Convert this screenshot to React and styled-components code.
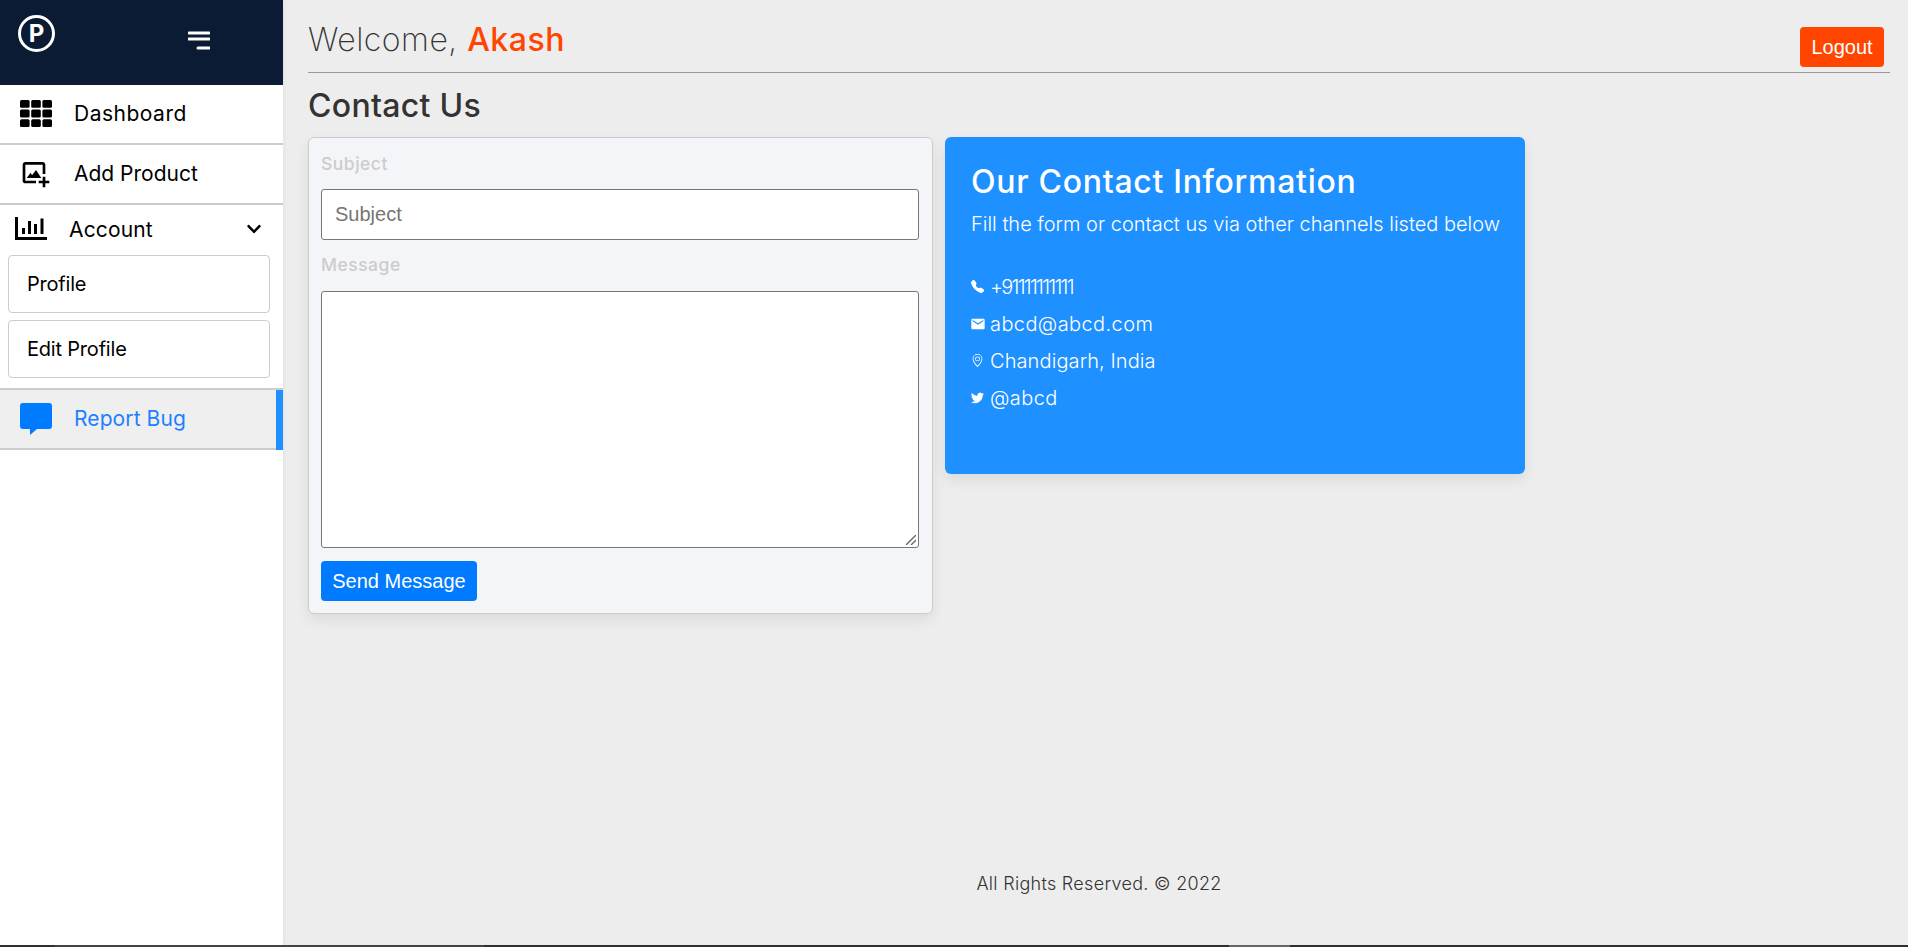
import React from "react";
import styled, { createGlobalStyle } from "styled-components";
import { BsTwitter, BsTelephoneFill, BsGeoAlt } from "react-icons/bs";
import { BiImageAdd } from "react-icons/bi";
import { MdEmail } from "react-icons/md";
import { FaChevronDown } from "react-icons/fa";

const poppins = `Inter, "Noto Sans", sans-serif`;
const arial = `"Liberation Sans", Arial, sans-serif`;

const GlobalStyle = createGlobalStyle`
  html, body {
    margin: 0;
    padding: 0;
    height: 100%;
    overflow: hidden;
    background: #ededed;
    font-family: ${poppins};
  }
  * {
    box-sizing: border-box;
  }
`;

const Page = styled.div`
  width: 100%;
  height: 100vh;
  display: flex;
  flex-direction: column;
`;
const Body = styled.div`
  flex: 1;
  min-height: 0;
  display: flex;
`;
const BottomStrip = styled.div`
  height: 2px;
  display: flex;
  background: #2f2f2f;
`;
const StripSegment = styled.span`
  margin-left: ${(p) => p.$left}px;
  width: ${(p) => p.$width}px;
  background: ${(p) => p.$color};
`;

const Sidebar = styled.aside`
  width: 283px;
  flex-shrink: 0;
  background: white;
  box-shadow: 1px 0 3px rgba(0, 0, 0, 0.05);
`;
const SidebarHead = styled.div`
  height: 85px;
  background: #0a1b33;
  display: flex;
  padding: 15px 0 0 18px;
`;
const LogoMark = styled.div`
  width: 37px;
  height: 37px;
  border: 3.5px solid white;
  border-radius: 50%;
  color: white;
  display: flex;
  align-items: center;
  justify-content: center;
  font-family: ${poppins};
  font-size: 24px;
  font-weight: 700;
  line-height: 1;
`;
const MenuToggle = styled.svg`
  width: 22px;
  height: 20px;
  margin: 16px 0 0 133px;
`;
const NavRow = styled.div`
  height: 60px;
  display: flex;
  align-items: center;
  padding: 0 0 1px 20px;
  font-size: 21px;
  letter-spacing: ${(p) => p.$spacing || 0}px;
  color: ${(p) => (p.$active ? "#1e80ff" : "black")};
  background: ${(p) => (p.$active ? "#efefef" : "white")};
  border-bottom: 2px solid #ccc;
  position: relative;
  ${(p) =>
    p.$active &&
    `
    border-top: 2px solid #ccc;
    height: 62px;
    margin-top: 10px;
    &:after {
      content: "";
      position: absolute;
      top: 0;
      right: 0;
      bottom: -2px;
      width: 7px;
      background: #1e90ff;
    }
  `}
`;
const NavIcon = styled.span`
  width: 32px;
  margin-right: 22px;
  display: flex;
  justify-content: center;
  align-items: center;
  flex-shrink: 0;
`;
const AccountRow = styled.div`
  height: 46px;
  display: flex;
  align-items: center;
  padding: 2px 21px 0 15px;
  font-size: 21px;
  letter-spacing: 0.15px;
  color: black;
`;
const AccountLabel = styled.span`
  flex: 1;
`;
const SubMenu = styled.div`
  padding: 4px 13px 0 8px;
  display: flex;
  flex-direction: column;
  gap: 7px;
`;
const SubItem = styled.div`
  height: 58px;
  border: 1px solid #ccc;
  border-radius: 4px;
  display: flex;
  align-items: center;
  padding-left: 18px;
  font-size: 20px;
  letter-spacing: -0.2px;
  color: black;
`;

const Main = styled.main`
  flex: 1;
  min-width: 0;
  display: flex;
  flex-direction: column;
  padding: 0 18px 0 25px;
`;
const TopBar = styled.header`
  height: 73px;
  display: flex;
  justify-content: space-between;
  align-items: flex-start;
  border-bottom: 1px solid #999;
`;
const Welcome = styled.h2`
  margin: 20px 0 0;
  font-size: 32px;
  line-height: 40px;
  font-weight: 200;
  letter-spacing: 0.5px;
  color: #333;
`;
const UserName = styled.span`
  font-weight: 500;
  letter-spacing: 0.5px;
  color: orangered;
`;
const LogoutButton = styled.button`
  margin: 27px 6px 0 0;
  width: 84px;
  height: 40px;
  padding: 0;
  border: none;
  border-radius: 4px;
  background: orangered;
  color: white;
  font-family: ${arial};
  font-size: 20px;
`;
const PageTitle = styled.h3`
  margin: 0;
  padding-top: 13px;
  font-size: 32px;
  line-height: 40px;
  font-weight: 500;
  letter-spacing: 0.3px;
  color: #333;
`;
const Cards = styled.div`
  margin-top: 11px;
  display: flex;
  align-items: flex-start;
  gap: 12px;
`;
const FormCard = styled.form`
  width: 625px;
  height: 477px;
  padding: 14px 13px 0 12px;
  background: #f4f5f9;
  border: 1px solid #ccc;
  border-radius: 6px;
  box-shadow: 0 6px 14px rgba(0, 0, 0, 0.08);
  display: flex;
  flex-direction: column;
  align-items: flex-start;
`;
const FieldLabel = styled.label`
  font-size: 17.5px;
  line-height: 24px;
  font-weight: 500;
  letter-spacing: 0.5px;
  color: #ccc;
  margin-bottom: ${(p) => p.$gap}px;
`;
const TextInput = styled.input`
  width: 100%;
  height: 51px;
  padding: 0 13px;
  margin-bottom: 13px;
  border: 1px solid #767676;
  border-radius: 3px;
  background: white;
  font-family: ${arial};
  font-size: 20px;
  &::placeholder {
    color: #757575;
  }
`;
const AreaWrap = styled.div`
  width: 100%;
  height: 257px;
  flex-shrink: 0;
  margin-bottom: 13px;
  position: relative;
`;
const TextArea = styled.textarea`
  width: 100%;
  height: 100%;
  display: block;
  resize: none;
  border: 1px solid #767676;
  border-radius: 3px;
  background: white;
`;
const ResizeGrip = styled.svg`
  position: absolute;
  right: 3px;
  bottom: 3px;
  width: 10px;
  height: 10px;
`;
const SendButton = styled.button`
  width: 156px;
  height: 40px;
  padding: 0;
  border: none;
  border-radius: 4px;
  background: #007bff;
  color: white;
  font-family: ${arial};
  font-size: 20px;
`;
const InfoCard = styled.section`
  width: 580px;
  height: 337px;
  padding: 24px 26px 0 26px;
  background: #1e90ff;
  border-radius: 6px;
  color: white;
  box-shadow: 0 6px 14px rgba(0, 0, 0, 0.08);
`;
const InfoTitle = styled.h3`
  margin: 0;
  font-size: 32px;
  line-height: 42px;
  font-weight: 500;
  letter-spacing: 0.7px;
`;
const InfoText = styled.p`
  margin: 6px 0 0;
  font-size: 20px;
  line-height: 30px;
  font-weight: 300;
  white-space: nowrap;
`;
const InfoList = styled.ul`
  list-style: none;
  margin: 29px 0 0;
  padding: 0;
`;
const InfoItem = styled.li`
  height: 37px;
  display: flex;
  align-items: center;
  gap: 6px;
  font-size: 20px;
  font-weight: 300;
  letter-spacing: ${(p) => p.$spacing}px;
`;
const InfoIcon = styled.span`
  width: 13px;
  display: flex;
  justify-content: center;
  font-size: ${(p) => p.$size || 13}px;
  svg {
    flex-shrink: 0;
  }
`;
const Footer = styled.footer`
  margin-top: auto;
  padding-bottom: 49px;
  text-align: center;
  font-size: 18px;
  line-height: 24px;
  font-weight: 300;
  letter-spacing: 0.3px;
  color: #333;
`;

const gridCells = [0, 1, 2].flatMap((row) =>
  [0, 1, 2].map((col) => ({ x: col * 11.2, y: row * 9.6 }))
);

const App = () => {
  return (
    <Page>
      <GlobalStyle />
      <Body>
        <Sidebar>
          <SidebarHead>
            <LogoMark>P</LogoMark>
            <MenuToggle viewBox="0 0 22 20">
              <path d="M1 2h20M1 8h20M10 17h11" stroke="white" strokeWidth="3" strokeLinecap="round" />
            </MenuToggle>
          </SidebarHead>
          <NavRow $spacing={0.5}>
            <NavIcon>
              <svg width="32" height="27" viewBox="0 0 32 27">
                {gridCells.map((c) => (
                  <rect key={`${c.x}-${c.y}`} x={c.x} y={c.y} width="9.6" height="7.8" rx="1.5" fill="black" />
                ))}
              </svg>
            </NavIcon>
            Dashboard
          </NavRow>
          <NavRow>
            <NavIcon>
              <BiImageAdd size={34} />
            </NavIcon>
            Add Product
          </NavRow>
          <AccountRow>
            <NavIcon>
              <svg width="32" height="24" viewBox="0 0 32 24">
                <path d="M1.5 0v21.5H32" fill="none" stroke="black" strokeWidth="3" />
                <path d="M8.5 11v6M14.5 4v13M20.5 7v10M27 1.5V17" stroke="black" strokeWidth="3" />
              </svg>
            </NavIcon>
            <AccountLabel>Account</AccountLabel>
            <FaChevronDown size={16} />
          </AccountRow>
          <SubMenu>
            <SubItem>Profile</SubItem>
            <SubItem>Edit Profile</SubItem>
          </SubMenu>
          <NavRow $active $spacing={0.1}>
            <NavIcon>
              <svg width="32" height="32" viewBox="0 0 32 32">
                <path
                  d="M3 0h26a3 3 0 0 1 3 3v20a3 3 0 0 1-3 3H17l-7 6v-6H3a3 3 0 0 1-3-3V3a3 3 0 0 1 3-3z"
                  fill="#007bff"
                />
              </svg>
            </NavIcon>
            Report Bug
          </NavRow>
        </Sidebar>
        <Main>
          <TopBar>
            <Welcome>
              Welcome, <UserName>Akash</UserName>
            </Welcome>
            <LogoutButton type="button">Logout</LogoutButton>
          </TopBar>
          <PageTitle>Contact Us</PageTitle>
          <Cards>
            <FormCard>
              <FieldLabel $gap={13}>Subject</FieldLabel>
              <TextInput placeholder="Subject" />
              <FieldLabel $gap={14}>Message</FieldLabel>
              <AreaWrap>
                <TextArea />
                <ResizeGrip viewBox="0 0 10 10">
                  <path d="M0 10L10 0M5 10l5-5" stroke="#666" strokeWidth="1.4" />
                </ResizeGrip>
              </AreaWrap>
              <SendButton type="button">Send Message</SendButton>
            </FormCard>
            <InfoCard>
              <InfoTitle>Our Contact Information</InfoTitle>
              <InfoText>Fill the form or contact us via other channels listed below</InfoText>
              <InfoList>
                <InfoItem $spacing={-1.75}>
                  <InfoIcon>
                    <BsTelephoneFill />
                  </InfoIcon>
                  +91111111111
                </InfoItem>
                <InfoItem $spacing={0.4}>
                  <InfoIcon $size={16}>
                    <MdEmail />
                  </InfoIcon>
                  abcd@abcd.com
                </InfoItem>
                <InfoItem $spacing={0.1}>
                  <InfoIcon>
                    <BsGeoAlt />
                  </InfoIcon>
                  Chandigarh, India
                </InfoItem>
                <InfoItem $spacing={0.4}>
                  <InfoIcon>
                    <BsTwitter />
                  </InfoIcon>
                  @abcd
                </InfoItem>
              </InfoList>
            </InfoCard>
          </Cards>
          <Footer>All Rights Reserved. © 2022</Footer>
        </Main>
      </Body>
      <BottomStrip>
        <StripSegment $left={55} $width={429} $color="#444" />
        <StripSegment $left={745} $width={61} $color="#666" />
      </BottomStrip>
    </Page>
  );
};

export default App;
